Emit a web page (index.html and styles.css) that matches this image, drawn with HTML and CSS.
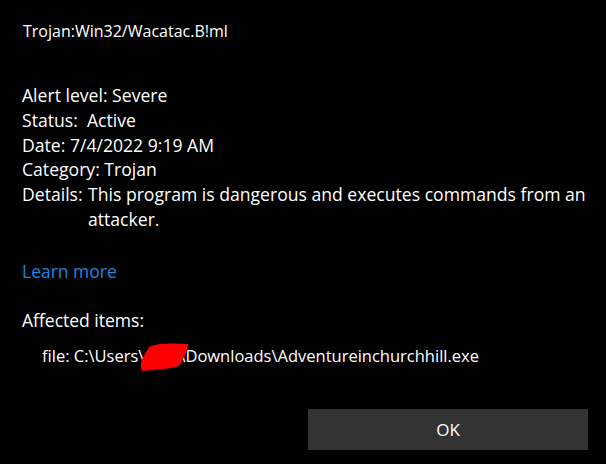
FILE: index.html
```html
<!DOCTYPE html>
<html>
<head>
<meta charset="utf-8">
<link rel="stylesheet" href="styles.css">
</head>
<body>
<div class="dialog">
  <div class="title">Trojan:Win32/Wacatac.B!ml</div>
  <div class="props">
    <div class="row">Alert level: Severe</div>
    <div class="row">Status:&nbsp; Active</div>
    <div class="row">Date: 7/4/2022 9:19 AM</div>
    <div class="row">Category: Trojan</div>
    <div class="row details"><span class="label">Details:</span><span class="value">This program is dangerous and executes commands from an attacker.</span></div>
  </div>
  <a class="learn" href="#">Learn more</a>
  <div class="affected">Affected items:</div>
  <div class="file">file: C:\Users\<span class="redact"><svg width="52" height="32" viewBox="0 0 52 32"><path d="M13 5 C20 2 36 2 50 3 C50 8 46 18 41 25 C30 28 16 29 4 30 C2 25 3 19 6 15 C8 11 10 7 13 5 Z" fill="#ff0000"/></svg></span>\Downloads\Adventureinchurchhill.exe</div>
  <div class="actions"><button class="ok">OK</button></div>
</div>
</body>
</html>
```
FILE: styles.css
```css
html, body {
  margin: 0;
  padding: 0;
  background: #000;
}
body {
  width: 606px;
  height: 464px;
  overflow: hidden;
  font-family: "Open Sans", "Noto Sans", sans-serif;
  color: #fff;
}
.dialog {
  padding: 21px 0 0 22px;
  display: flex;
  flex-direction: column;
}
.title {
  font-size: 16px;
  line-height: 20px;
  padding-left: 1px;
}
.props {
  margin-top: 42px;
  font-size: 17.6px;
  line-height: 24.8px;
}
.details {
  display: flex;
}
.label {
  flex: none;
  width: 66px;
}
.value {
  width: 516px;
}
.learn {
  margin-top: 27px;
  font-size: 17.5px;
  line-height: 25px;
  color: #1a86e0;
  text-decoration: none;
  align-self: flex-start;
}
.affected {
  margin-top: 24px;
  font-size: 17.5px;
  line-height: 25px;
}
.file {
  margin-top: 12px;
  margin-left: 20px;
  font-size: 16.5px;
  line-height: 22px;
}
.redact {
  position: relative;
  display: inline-block;
  width: 35px;
  height: 1px;
}
.redact svg {
  position: absolute;
  left: -6px;
  top: -20px;
}
.actions {
  display: flex;
  justify-content: flex-end;
  padding-right: 18px;
  margin-top: 42px;
}
.ok {
  width: 280px;
  height: 41px;
  border: none;
  background: #333333;
  color: #fff;
  font-family: inherit;
  font-size: 17px;
}
```
